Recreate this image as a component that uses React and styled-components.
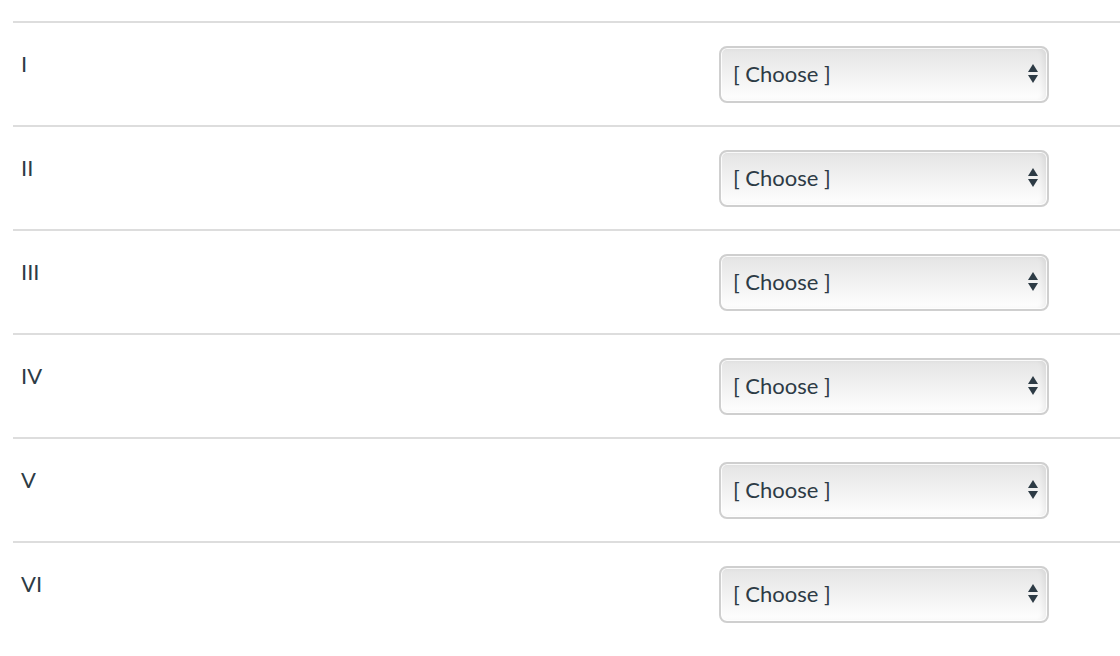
import React from 'react'
import styled, { createGlobalStyle } from 'styled-components'

const GlobalStyle = createGlobalStyle`
  body {
    margin: 0;
    background: #fff;
    font-family: Lato, "Liberation Sans", sans-serif;
    color: #2d3b45;
  }
`

const Page = styled.div`
  padding: 21px 0 0 13px;
  overflow: hidden;
`

const Row = styled.div`
  display: flex;
  border-top: 2px solid #dddddd;
  padding: 23px 0 22px;
  width: 1200px;
`

const Label = styled.div`
  width: 706px;
  padding-left: 8px;
  box-sizing: border-box;
  font-size: 22px;
  line-height: 33px;
  padding-top: 1px;
`

const SelectWrap = styled.div`
  position: relative;
  width: 330px;
  height: 57px;
`

const Select = styled.select`
  appearance: none;
  -webkit-appearance: none;
  width: 100%;
  height: 100%;
  box-sizing: border-box;
  border: 2px solid #cfcfcf;
  border-radius: 8px;
  background: linear-gradient(#e4e4e4, #ffffff);
  box-shadow: inset 0 0 0 1px rgba(255, 255, 255, 0.85), inset -4px 0 5px rgba(0, 0, 0, 0.06);
  font-family: Lato, "Liberation Sans", sans-serif;
  font-size: 22px;
  color: #2d3b45;
  padding: 0 40px 3px 12px;
  outline: none;
`

const Arrows = styled.svg`
  position: absolute;
  right: 10px;
  top: 17px;
  pointer-events: none;
`

const items = ['I', 'II', 'III', 'IV', 'V', 'VI']

const ChooseSelect = () => (
  <SelectWrap>
    <Select defaultValue="">
      <option value="">[ Choose ]</option>
    </Select>
    <Arrows width="12" height="22" viewBox="0 0 12 22">
      <path d="M6 1 L11 9 L1 9 Z" fill="#2d3b45" />
      <path d="M1 12 L11 12 L6 20 Z" fill="#2d3b45" />
    </Arrows>
  </SelectWrap>
)

export default function App() {
  return (
    <Page>
      <GlobalStyle />
      {items.map(item => (
        <Row key={item}>
          <Label>{item}</Label>
          <ChooseSelect />
        </Row>
      ))}
    </Page>
  )
}
